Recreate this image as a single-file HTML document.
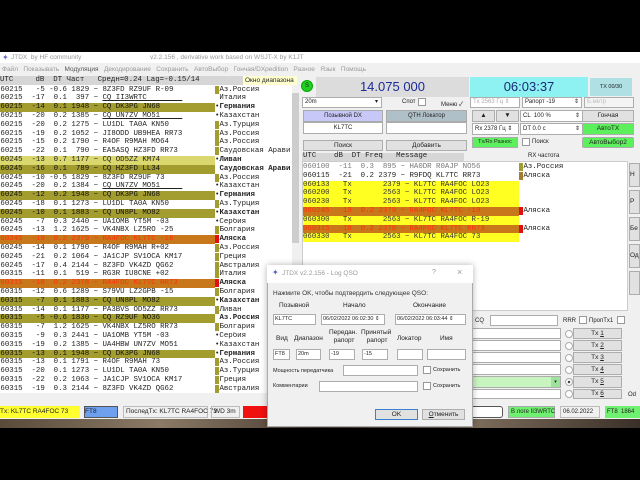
<!DOCTYPE html>
<html><head><meta charset="utf-8"><style>
*{margin:0;padding:0;box-sizing:border-box}
body{width:640px;height:480px;background:#000;position:relative;overflow:hidden;font-family:"Liberation Sans","Noto Sans CJK SC",sans-serif;font-size:7px;color:#222}
.a{position:absolute;white-space:pre}
.a.lst{white-space:normal}
.win{position:absolute;left:0;top:52px;width:640px;height:368px;background:#f0f0f0}
.m{font-family:"Liberation Mono",monospace;font-size:7.4px;line-height:8.8px}
.row{height:8.8px;white-space:pre;overflow:hidden}
.o{background:#a39c2f;color:#111}
.ly{background:#d9d76e}
.or{background:#c8781a;color:#ff3010}
.y{background:#ffff22;color:#333}
.g{color:#777}
.u{text-decoration:underline}
.box{position:absolute;border:1px solid #adadad;background:#fff;white-space:pre}
.btn{position:absolute;border:1px solid #adadad;background:#e1e1e1;text-align:center;font-size:6.5px;white-space:pre}
.grn{background:#5cf05c}
.cb{position:absolute;width:8px;height:8px;border:1px solid #999;background:#fff}
.rad{position:absolute;width:8px;height:8px;border:1px solid #aaa;border-radius:50%;background:#fff}
</style></head><body>
<div class="win"></div>
<div class="a" style="left:0;top:52px;width:640px;height:11px;background:#fff"></div>
<div class="a" style="left:2px;top:53px;color:#6a6ad0;font-size:8px">✦</div>
<div class="a" style="left:11px;top:54px;color:#999;font-size:6.5px">JTDX  by HF community</div>
<div class="a" style="left:150px;top:54px;color:#999;font-size:6.5px">v2.2.156 , derivative work based on WSJT-X by K1JT</div>
<div class="a" style="left:2px;top:66px;color:#999;font-size:6.5px">Файл   Показывать   <span style="color:#555">Модуляция</span>   Декодирование   Сохранить   АвтоВыбор   Гончая/DXpedition   Разное   Язык   Помощь</div>
<div class="a" style="left:0;top:76px;width:243px;height:9px;background:#d6d6d6"></div>
<div class="a m" style="left:0;top:76px">UTC     dB  DT Част   Средн=0.24 Lag=-0.15/14</div>
<div class="a" style="left:243px;top:76px;width:54px;height:9px;background:#ffffd0;font-size:6.5px;padding-left:2px;line-height:9px">Окно диапазона</div>
<div class="a" style="left:0;top:85px;width:292px;height:308px;background:#fff"></div>
<div class="a m lst" style="left:-4px;top:85.6px;width:219px"><div class="row">060215   -5 -0.6 1829 ~ 8Z3FD RZ9UF R-09</div><div class="row">060215  -17  0.1  397 ~ <span class="u">CQ II3WRTC        </span></div><div class="row o">060215  -14  0.1 1948 ~ CQ DK3PG JN68</div><div class="row">060215  -20  0.2 1385 ~ <span class="u">CQ UN7ZV MO51     </span></div><div class="row">060215  -20  0.2 1275 ~ LU1DL TA0A KN50</div><div class="row">060215  -19  0.2 1052 ~ JI8ODD UB9HEA RR73</div><div class="row">060215  -15  0.2 1790 ~ R4OF R9MAH MO64</div><div class="row">060215  -22  0.1  790 ~ EA5ASQ HZ3FD RR73</div><div class="row ly">060245  -13  0.7 1177 ~ CQ OD5ZZ KM74</div><div class="row o">060245  -16  0.1  789 ~ CQ HZ3FD LL34</div><div class="row">060245  -10 -0.5 1829 ~ 8Z3FD RZ9UF 73</div><div class="row">060245  -20  0.2 1384 ~ <span class="u">CQ UN7ZV MO51     </span></div><div class="row o">060245  -12  0.2 1948 ~ CQ DK3PG JN68</div><div class="row">060245  -18  0.1 1273 ~ LU1DL TA0A KN50</div><div class="row o">060245  -10  0.1 1883 ~ CQ UN8PL MO82</div><div class="row">060245   -7  0.3 2440 ~ UA1OMB YT5M -03</div><div class="row">060245  -13  1.2 1625 ~ VK4NBX LZ5RO -25</div><div class="row or">060245  -19  0.2 2379 ~ RA4FOC KL7TC -18</div><div class="row">060245  -14  0.1 1790 ~ R4OF R9MAH R+02</div><div class="row">060245  -21  0.2 1064 ~ JA1CJP SV1OCA KM17</div><div class="row">060245  -17  0.4 2144 ~ 8Z3FD VK4ZD QG62</div><div class="row">060315  -11  0.1  519 ~ RG3R IU8CNE +02</div><div class="row or">060315  -18  0.2 2378 ~ RA4FOC KL7TC RR73</div><div class="row">060315  -12  0.6 1289 ~ S79VU LZ2GPB -15</div><div class="row o">060315   -7  0.1 1883 ~ CQ UN8PL MO82</div><div class="row">060315  -14  0.1 1177 ~ PA3BVS OD5ZZ RR73</div><div class="row o">060315   -5 -0.6 1830 ~ CQ RZ9UF NO36</div><div class="row">060315   -7  1.2 1625 ~ VK4NBX LZ5RO RR73</div><div class="row">060315   -9  0.3 2441 ~ UA1OMB YT5M -03</div><div class="row">060315  -19  0.2 1385 ~ UA4HBW UN7ZV MO51</div><div class="row o">060315  -13  0.1 1948 ~ CQ DK3PG JN68</div><div class="row">060315  -13  0.1 1791 ~ R4OF R9MAH 73</div><div class="row">060315  -20  0.1 1273 ~ LU1DL TA0A KN50</div><div class="row">060315  -22  0.2 1063 ~ JA1CJP SV1OCA KM17</div><div class="row">060315  -19  0.3 2144 ~ 8Z3FD VK4ZD QG62</div></div>
<div class="a m lst" style="left:215px;top:85.6px;width:77px"><div class="row"><span style="background:#a39c2f"> </span>Аз.Россия</div><div class="row"> Италия</div><div class="row">•<b>Германия</b></div><div class="row">•Казахстан</div><div class="row"><span style="background:#a39c2f"> </span>Аз.Турция</div><div class="row"><span style="background:#a39c2f"> </span>Аз.Россия</div><div class="row"><span style="background:#a39c2f"> </span>Аз.Россия</div><div class="row"><span style="background:#a39c2f"> </span>Саудовская Арави</div><div class="row">•<b>Ливан</b></div><div class="row"> <b>Саудовская Арави</b></div><div class="row"><span style="background:#a39c2f"> </span>Аз.Россия</div><div class="row">•Казахстан</div><div class="row">•<b>Германия</b></div><div class="row"><span style="background:#a39c2f"> </span>Аз.Турция</div><div class="row">•<b>Казахстан</b></div><div class="row">•Сербия</div><div class="row"><span style="background:#a39c2f"> </span>Болгария</div><div class="row"><span style="background:#e01010"> </span><b>Аляска</b></div><div class="row"><span style="background:#a39c2f"> </span>Аз.Россия</div><div class="row"><span style="background:#a39c2f"> </span>Греция</div><div class="row"><span style="background:#a39c2f"> </span>Австралия</div><div class="row"><span style="background:#a39c2f"> </span>Италия</div><div class="row"><span style="background:#e01010"> </span><b>Аляска</b></div><div class="row"><span style="background:#a39c2f"> </span>Болгария</div><div class="row">•<b>Казахстан</b></div><div class="row"><span style="background:#a39c2f"> </span>Ливан</div><div class="row"> <b>Аз.Россия</b></div><div class="row"><span style="background:#a39c2f"> </span>Болгария</div><div class="row">•Сербия</div><div class="row">•Казахстан</div><div class="row">•<b>Германия</b></div><div class="row"><span style="background:#a39c2f"> </span>Аз.Россия</div><div class="row"><span style="background:#a39c2f"> </span>Аз.Турция</div><div class="row"><span style="background:#a39c2f"> </span>Греция</div><div class="row"><span style="background:#a39c2f"> </span>Австралия</div></div>
<div class="a" style="left:292px;top:85px;width:8px;height:308px;background:#f0f0f0"></div>
<div class="a" style="left:292px;top:93px;width:7px;height:150px;background:#cdcdcd"></div>
<div class="a" style="left:0;top:393px;width:300px;height:7px;background:#f0f0f0"></div>
<div class="a" style="left:0;top:406px;width:80px;height:12px;background:#ffff30;font-size:6.5px;line-height:12px">Tx: KL7TC RA4FOC 73</div>
<div class="a" style="left:84px;top:406px;width:34px;height:12px;background:#6fa0f0;border:1px solid #555;font-size:6.5px;line-height:10px">FT8</div>
<div class="a" style="left:123px;top:406px;width:85px;height:12px;border:1px solid #bbb;font-size:6.5px;line-height:10px;padding-left:2px">ПоследTx: KL7TC RA4FOC 73</div>
<div class="a" style="left:211px;top:406px;width:29px;height:12px;border:1px solid #bbb;font-size:6.5px;line-height:10px;padding-left:2px">WD 3m</div>
<div class="a" style="left:243px;top:406px;width:25px;height:12px;background:#f01010"></div>
<div class="a" style="left:0;top:419px;width:640px;height:9px;background:linear-gradient(90deg,#5a4a3a,#8a7a66,#4a3a30,#7a6a5a,#3a3028)"></div>

<div class="a" style="left:301px;top:80px;width:12px;height:12px;border-radius:50%;background:#20d020;border:1px solid #0a0;font-size:6px;text-align:center;line-height:10px">S</div>
<div class="a" style="left:316px;top:77px;width:153px;height:20px;background:#dcdcdc;color:#1a2a9a;font-size:13px;text-align:center;line-height:20px">14.075 000</div>
<div class="a" style="left:470px;top:77px;width:118px;height:20px;background:#8ff2f2;color:#1a2a7a;font-size:13px;text-align:center;line-height:20px">06:03:37</div>
<div class="a" style="left:590px;top:78px;width:42px;height:18px;background:#aee0e4;font-size:5.5px;text-align:center;line-height:18px">TX 00/30</div>
<div class="box" style="left:302px;top:97px;width:80px;height:11px;font-size:6px;line-height:9px;padding-left:2px">20m<span style="position:absolute;right:3px">▾</span></div>
<div class="a" style="left:402px;top:99px;font-size:6px">Спот</div><div class="cb" style="left:418px;top:98px"></div>
<div class="a" style="left:441px;top:99px;font-size:6px">Меню ✓</div>
<div class="box" style="left:470px;top:97px;width:50px;height:11px;font-size:6px;color:#aaa;line-height:9px;padding-left:2px">Tx 2563 Гц ⇕</div>
<div class="box" style="left:522px;top:97px;width:60px;height:11px;font-size:6px;line-height:9px;padding-left:2px">Рапорт -19<span style="position:absolute;right:2px">⇕</span></div>
<div class="box" style="left:584px;top:97px;width:50px;height:11px;font-size:6px;color:#bbb;background:#f4f4f4;line-height:9px;padding-left:2px">Б.метр</div>
<div class="a" style="left:303px;top:110px;width:80px;height:12px;background:#c8c8f8;border:1px solid #aaa;font-size:6px;text-align:center;line-height:10px">Позывной DX</div>
<div class="a" style="left:386px;top:110px;width:81px;height:12px;background:#b0c0c8;border:1px solid #aaa;font-size:6px;text-align:center;line-height:10px">QTH Локатор</div>
<div class="box" style="left:303px;top:122px;width:80px;height:12px;font-size:6px;text-align:center;line-height:10px">KL7TC</div>
<div class="box" style="left:386px;top:122px;width:81px;height:12px"></div>
<div class="btn" style="left:472px;top:110px;width:23px;height:12px;line-height:10px">▲</div>
<div class="btn" style="left:496px;top:110px;width:23px;height:12px;line-height:10px">▼</div>
<div class="box" style="left:520px;top:110px;width:63px;height:12px;font-size:6px;line-height:10px;padding-left:2px">CL  100 %<span style="position:absolute;right:2px">⇕</span></div>
<div class="btn" style="left:582px;top:110px;width:52px;height:12px;line-height:10px">Гончая</div>
<div class="box" style="left:472px;top:123px;width:47px;height:12px;font-size:6px;line-height:10px;padding-left:2px">Rx 2378 Гц ⇕</div>
<div class="box" style="left:520px;top:123px;width:63px;height:12px;font-size:6px;line-height:10px;padding-left:2px">DT 0.0 c<span style="position:absolute;right:2px">⇕</span></div>
<div class="btn grn" style="left:582px;top:123px;width:52px;height:12px;line-height:10px">АвтоTX</div>
<div class="btn grn" style="left:472px;top:137px;width:46px;height:11px;line-height:9px;font-size:5.5px">Tx/Rx Разнос</div>
<div class="cb" style="left:522px;top:138px"></div><div class="a" style="left:532px;top:139px;font-size:6px">Поиск</div>
<div class="btn grn" style="left:582px;top:137px;width:52px;height:11px;line-height:9px;border-radius:2px">АвтоВыбор2</div>
<div class="btn" style="left:303px;top:140px;width:80px;height:11px;line-height:9px">Поиск</div>
<div class="btn" style="left:386px;top:140px;width:81px;height:11px;line-height:9px">Добавить</div>
<div class="a" style="left:302px;top:153px;width:162px;height:8px;background:#d6d6d6"></div>
<div class="a m" style="left:303px;top:152px">UTC    dB  DT Freq   Message</div>
<div class="a" style="left:528px;top:153px;font-size:6px">RX частота</div>
<div class="a" style="left:302px;top:161px;width:326px;height:150px;background:#fff;border:1px solid #ccc"></div>
<div class="a m lst" style="left:303px;top:163px;width:216px"><div class="row g">060100  -11  0.3  895 ~ HA0DR R0AJP NO56</div><div class="row">060115  -21  0.2 2379 ~ R9FDQ KL7TC RR73</div><div class="row y">060133   Tx       2379 ~ KL7TC RA4FOC LO23</div><div class="row y">060200   Tx       2563 ~ KL7TC RA4FOC LO23</div><div class="row y">060230   Tx       2563 ~ KL7TC RA4FOC LO23</div><div class="row or">060245  -19  0.2 2379 ~ RA4FOC KL7TC -19</div><div class="row y">060300   Tx       2563 ~ KL7TC RA4FOC R-19</div><div class="row or">060315  -18  0.2 2378 ~ RA4FOC KL7TC RR73</div><div class="row y">060330   Tx       2563 ~ KL7TC RA4FOC 73</div></div>
<div class="a m lst" style="left:519px;top:163px;width:100px"><div class="row"><span style="background:#a39c2f"> </span>Аз.Россия</div><div class="row"><span style="background:#a37c2f"> </span>Аляска</div><div class="row"> </div><div class="row"> </div><div class="row"> </div><div class="row"><span style="background:#e01010"> </span>Аляска</div><div class="row"> </div><div class="row"><span style="background:#e01010"> </span>Аляска</div></div>
<div class="btn" style="left:629px;top:163px;width:11px;height:24px;line-height:22px;text-align:left">Н</div>
<div class="btn" style="left:629px;top:190px;width:11px;height:24px;line-height:22px;text-align:left">Р</div>
<div class="btn" style="left:629px;top:217px;width:11px;height:24px;line-height:22px;text-align:left">Бе</div>
<div class="btn" style="left:629px;top:244px;width:11px;height:24px;line-height:22px;text-align:left">Од</div>
<div class="btn" style="left:629px;top:271px;width:11px;height:24px"></div>
<div class="a" style="left:475px;top:318px;font-size:6px">CQ</div>
<div class="box" style="left:490px;top:315px;width:68px;height:11px"></div>
<div class="a" style="left:563px;top:318px;font-size:6px">RRR</div><div class="cb" style="left:579px;top:316px"></div>
<div class="a" style="left:589px;top:318px;font-size:6px">ПропTx1</div><div class="cb" style="left:617px;top:316px"></div>
<div class="box" style="left:470px;top:328px;width:91px;height:11px"></div>
<div class="box" style="left:470px;top:340px;width:91px;height:11px"></div>
<div class="box" style="left:470px;top:352px;width:91px;height:11px"></div>
<div class="box" style="left:470px;top:364px;width:91px;height:11px"></div>
<div class="box" style="left:470px;top:376px;width:91px;height:12px;background:#c8f4c0"><span style="position:absolute;right:0;top:0;width:9px;height:10px;background:#9de29d;font-size:5px;text-align:center;line-height:10px">▾</span></div>
<div class="box" style="left:470px;top:389px;width:91px;height:10px"></div>
<div class="rad" style="left:565px;top:330px"></div>
<div class="rad" style="left:565px;top:342px"></div>
<div class="rad" style="left:565px;top:354px"></div>
<div class="rad" style="left:565px;top:366px"></div>
<div class="rad" style="left:565px;top:378px;background:radial-gradient(#444 25%,#fff 35%)"></div>
<div class="rad" style="left:565px;top:390px"></div>
<div class="btn" style="left:573px;top:328px;width:49px;height:11px;line-height:9px">Tx <u>1</u></div>
<div class="btn" style="left:573px;top:340px;width:49px;height:11px;line-height:9px">Tx <u>2</u></div>
<div class="btn" style="left:573px;top:352px;width:49px;height:11px;line-height:9px">Tx <u>3</u></div>
<div class="btn" style="left:573px;top:364px;width:49px;height:11px;line-height:9px">Tx <u>4</u></div>
<div class="btn" style="left:573px;top:376px;width:49px;height:12px;line-height:10px">Tx <u>5</u></div>
<div class="btn" style="left:573px;top:389px;width:49px;height:10px;line-height:8px">Tx <u>6</u></div>
<div class="a" style="left:628px;top:392px;font-size:6px">Od</div>
<div class="a" style="left:460px;top:406px;width:43px;height:12px;border:1px solid #555;border-radius:3px;background:#fff"></div>
<div class="a" style="left:508px;top:406px;width:47px;height:12px;background:#70f070;border:1px solid #aaa;font-size:6px;line-height:10px;padding-left:2px">В логе II3WRTC</div>
<div class="a" style="left:560px;top:406px;width:40px;height:12px;border:1px solid #bbb;font-size:6px;line-height:10px;padding-left:2px">06.02.2022</div>
<div class="a" style="left:605px;top:406px;width:35px;height:12px;background:#70f070;font-size:6px;line-height:12px;padding-left:2px">FT8  1864</div>

<div class="a" style="left:267px;top:265px;width:206px;height:162px;background:#f0f0f0;border:1px solid #aaa;box-shadow:0 0 6px rgba(0,0,0,.3)"></div>
<div class="a" style="left:267px;top:265px;width:206px;height:18px;background:#fff"></div>
<div class="a" style="left:272px;top:268px;color:#5560c8;font-size:8px">✦</div>
<div class="a" style="left:282px;top:270px;color:#999;font-size:6.5px">JTDX v2.2.156 - Log QSO</div>
<div class="a" style="left:432px;top:269px;color:#999;font-size:7px">?</div>
<div class="a" style="left:457px;top:267px;color:#999;font-size:9px">×</div>
<div class="a" style="left:273px;top:290px;font-size:6.5px;color:#333">Нажмите OK, чтобы подтвердить следующее QSO:</div>
<div class="a" style="left:279px;top:302px;font-size:6.5px">Позывной</div>
<div class="a" style="left:343px;top:302px;font-size:6.5px">Начало</div>
<div class="a" style="left:413px;top:302px;font-size:6.5px">Окончание</div>
<div class="box" style="left:273px;top:314px;width:43px;height:11px;font-size:5.5px;line-height:9px;padding-left:1px">KL7TC</div>
<div class="box" style="left:321px;top:314px;width:64px;height:11px;font-size:5.5px;line-height:9px;padding-left:1px">06/02/2022 06:02:30 ⇕</div>
<div class="box" style="left:395px;top:314px;width:71px;height:11px;font-size:5.5px;line-height:9px;padding-left:1px">06/02/2022 06:03:44 ⇕</div>
<div class="a" style="left:276px;top:335px;font-size:6.5px">Вид</div>
<div class="a" style="left:294px;top:335px;font-size:6.5px">Диапазон</div>
<div class="a" style="left:329px;top:329px;font-size:6.5px;text-align:center;line-height:7.5px">Передан.
 рапорт</div>
<div class="a" style="left:361px;top:329px;font-size:6.5px;text-align:center;line-height:7.5px">Принятый
 рапорт</div>
<div class="a" style="left:397px;top:335px;font-size:6.5px">Локатор</div>
<div class="a" style="left:440px;top:335px;font-size:6.5px">Имя</div>
<div class="box" style="left:273px;top:349px;width:17px;height:11px;font-size:5.5px;line-height:9px;padding-left:1px">FT8</div>
<div class="box" style="left:296px;top:349px;width:25px;height:11px;font-size:5.5px;line-height:9px;padding-left:1px">20m</div>
<div class="box" style="left:329px;top:349px;width:26px;height:11px;font-size:5.5px;line-height:9px;padding-left:1px">-19</div>
<div class="box" style="left:362px;top:349px;width:26px;height:11px;font-size:5.5px;line-height:9px;padding-left:1px">-15</div>
<div class="box" style="left:397px;top:349px;width:26px;height:11px"></div>
<div class="box" style="left:427px;top:349px;width:39px;height:11px"></div>
<div class="a" style="left:273px;top:368px;font-size:5.5px">Мощность передатчика</div>
<div class="box" style="left:343px;top:365px;width:75px;height:11px"></div>
<div class="cb" style="left:423px;top:366px"></div><div class="a" style="left:433px;top:367px;font-size:5.5px">Сохранить</div>
<div class="a" style="left:273px;top:383px;font-size:5.5px">Комментарии</div>
<div class="box" style="left:319px;top:381px;width:99px;height:11px"></div>
<div class="cb" style="left:423px;top:382px"></div><div class="a" style="left:433px;top:383px;font-size:5.5px">Сохранить</div>
<div class="btn" style="left:375px;top:409px;width:43px;height:11px;line-height:9px;border-color:#3c7fd0">OK</div>
<div class="btn" style="left:422px;top:409px;width:43px;height:11px;line-height:9px"><u>О</u>тменить</div>
</body></html>
